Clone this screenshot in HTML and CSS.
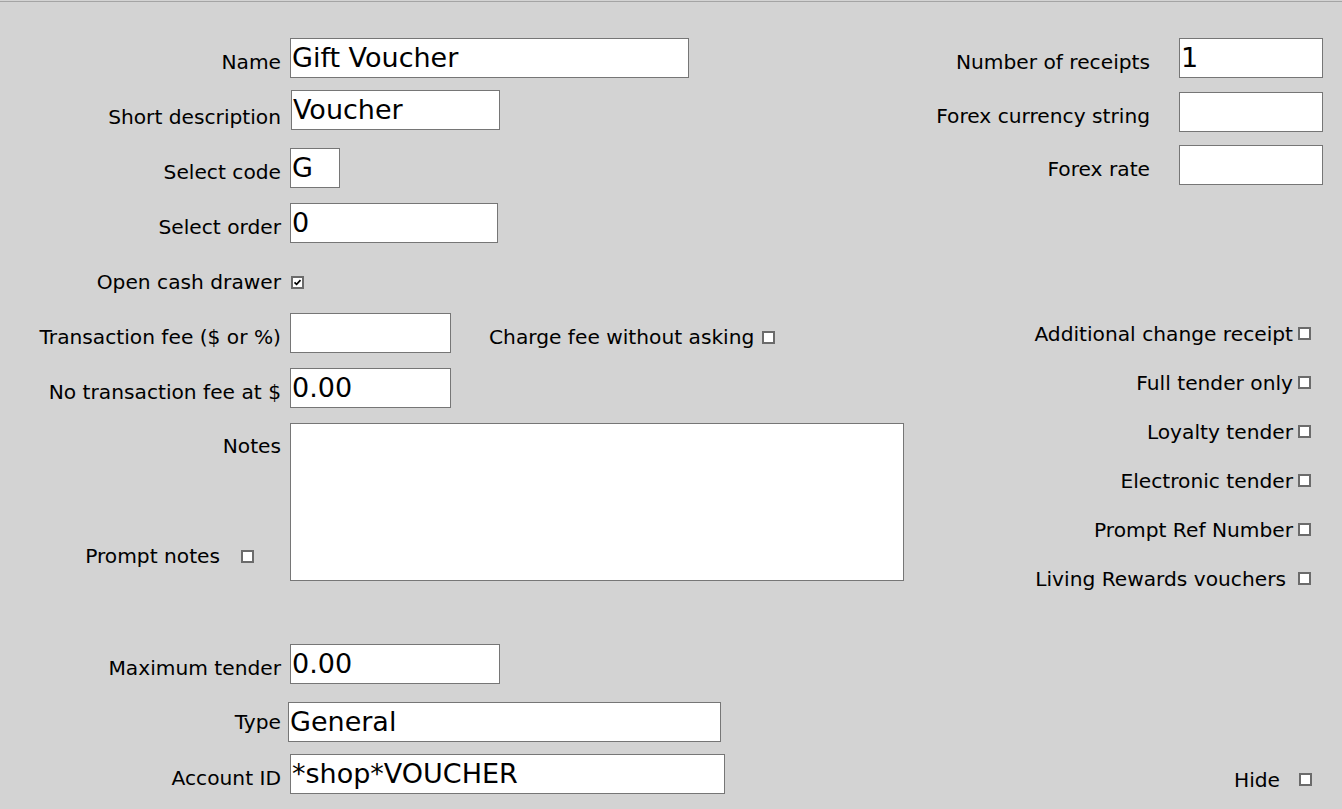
FILE: index.html
```html
<!DOCTYPE html>
<html lang="en">
<head>
<meta charset="utf-8">
<title>Tender type</title>
<link rel="stylesheet" href="styles.css">
</head>
<body>
<div class="page">
  <form class="left">
    <div class="row tight">
      <label class="lbl">Name</label>
      <div class="field"><input class="txt w-name" type="text" value="Gift Voucher"></div>
    </div>
    <div class="row loose">
      <label class="lbl lbl-low">Short description</label>
      <div class="field"><input class="txt w-short nudge" type="text" value="Voucher"></div>
    </div>
    <div class="row">
      <label class="lbl">Select code</label>
      <div class="field"><input class="txt w-code" type="text" value="G"></div>
    </div>
    <div class="row">
      <label class="lbl">Select order</label>
      <div class="field"><input class="txt w-order" type="text" value="0"></div>
    </div>
    <div class="row">
      <label class="lbl">Open cash drawer</label>
      <div class="field"><span class="cb cb-row"><svg viewBox="0 0 9 9" width="9" height="9"><path d="M1.5 4.3 L3.6 6.4 L7.5 2.2" fill="none" stroke="#000" stroke-width="1.7"/></svg></span></div>
    </div>
    <div class="row">
      <label class="lbl">Transaction fee ($ or %)</label>
      <div class="field">
        <input class="txt w-fee" type="text" value="">
        <span class="inline-flag">Charge fee without asking<span class="cb cb-near"></span></span>
      </div>
    </div>
    <div class="row">
      <label class="lbl">No transaction fee at $</label>
      <div class="field"><input class="txt w-fee" type="text" value="0.00"></div>
    </div>
    <div class="row notes">
      <div class="lbl notes-lbl">
        <span>Notes</span>
        <span class="prompt">Prompt notes<span class="cb cb-prompt"></span></span>
      </div>
      <div class="field"><textarea class="area"></textarea></div>
    </div>
    <div class="row loose">
      <label class="lbl">Maximum tender</label>
      <div class="field"><input class="txt w-max" type="text" value="0.00"></div>
    </div>
    <div class="row tight">
      <label class="lbl lbl-high">Type</label>
      <div class="field"><input class="txt w-type pull" type="text" value="General"></div>
    </div>
    <div class="row">
      <label class="lbl">Account ID</label>
      <div class="field"><input class="txt w-acct" type="text" value="*shop*VOUCHER"></div>
    </div>
  </form>

  <aside class="right">
    <div class="rfields">
      <label class="rlbl">Number of receipts</label><input class="txt w-r" type="text" value="1">
      <label class="rlbl">Forex currency string</label><input class="txt w-r" type="text" value="">
      <label class="rlbl">Forex rate</label><input class="txt w-r" type="text" value="">
    </div>
    <div class="flags">
      <div class="flag"><span>Additional change receipt</span><span class="cb"></span></div>
      <div class="flag"><span>Full tender only</span><span class="cb"></span></div>
      <div class="flag"><span>Loyalty tender</span><span class="cb"></span></div>
      <div class="flag"><span>Electronic tender</span><span class="cb"></span></div>
      <div class="flag"><span>Prompt Ref Number</span><span class="cb"></span></div>
      <div class="flag"><span>Living Rewards vouchers</span><span class="cb cb-wide"></span></div>
    </div>
    <div class="flag hide"><span>Hide</span><span class="cb cb-hide"></span></div>
  </aside>
</div>
</body>
</html>
```

FILE: styles.css
```css
html {
  background: #d3d3d3;
}
body {
  margin: 0;
  padding-top: 1px;
  background: #d3d3d3;
  color: #000;
  font-family: "DejaVu Sans", Verdana, sans-serif;
  font-size: 20.2px;
}
.page {
  border-top: 1px solid #a4a4a4;
  min-height: 807px;
  box-sizing: border-box;
  display: flex;
  justify-content: space-between;
}

/* left form */
.left {
  padding-top: 36px;
  margin: 0;
}
.row {
  display: grid;
  grid-template-columns: 281px auto;
  column-gap: 9px;
  align-items: end;
  height: 40px;
  margin-bottom: 15px;
}
.row.tight { margin-bottom: 12px; }
.row.loose { margin-bottom: 18px; }
.lbl {
  text-align: right;
  padding-bottom: 4px;
  white-space: nowrap;
}
.lbl-low { padding-bottom: 1px; }
.lbl-high { padding-bottom: 8px; }
.field {
  display: flex;
  align-items: flex-end;
  height: 40px;
}
.txt {
  box-sizing: border-box;
  height: 40px;
  margin: 0;
  border: 1px solid #767676;
  border-radius: 0;
  background: #fff;
  color: #000;
  font-family: "DejaVu Sans", Verdana, sans-serif;
  font-size: 27px;
  padding: 0 1px 2px;
  outline: none;
}
.w-name { width: 399px; }
.w-short { width: 209px; }
.w-code { width: 50px; }
.w-order { width: 208px; }
.w-fee { width: 161px; }
.w-max { width: 210px; }
.w-type { width: 433px; }
.w-acct { width: 435px; }
.w-r { width: 144px; }
.nudge { margin-left: 1px; }
.pull { margin-left: -2px; }

.cb {
  display: inline-flex;
  align-items: center;
  justify-content: center;
  box-sizing: border-box;
  width: 13px;
  height: 13px;
  border: 2px solid #6b6b6b;
  background: #fff;
  flex: none;
  margin-left: 5px;
}
.cb svg { display: block; }
.cb-row {
  margin-left: 1px;
  margin-bottom: 9px;
}
.inline-flag {
  display: flex;
  align-items: center;
  margin-left: 38px;
  padding-bottom: 4px;
  white-space: nowrap;
}
.cb-near { margin-left: 8px; }

.notes {
  height: 158px;
  margin-bottom: 63px;
}
.notes-lbl {
  align-self: stretch;
  display: flex;
  flex-direction: column;
  justify-content: space-between;
  align-items: flex-end;
  padding-top: 11px;
  padding-bottom: 13px;
}
.prompt {
  display: flex;
  align-items: center;
  padding-right: 27px;
}
.cb-prompt { margin-left: 21px; }
.notes .field { height: 158px; }
.area {
  box-sizing: border-box;
  width: 614px;
  height: 158px;
  margin: 0;
  border: 1px solid #767676;
  border-radius: 0;
  background: #fff;
  resize: none;
  outline: none;
}

/* right column */
.right {
  padding-top: 36px;
  display: flex;
  flex-direction: column;
  align-items: stretch;
}
.rfields {
  display: grid;
  grid-template-columns: auto 144px;
  column-gap: 29px;
  row-gap: 13.5px;
  align-items: end;
  padding-right: 19px;
}
.rlbl {
  text-align: right;
  padding-bottom: 4px;
  white-space: nowrap;
}
.flags {
  margin-top: 124px;
}
.flag {
  display: flex;
  justify-content: flex-end;
  align-items: center;
  height: 49px;
  padding-right: 31px;
  white-space: nowrap;
}
.cb-wide { margin-left: 12px; }
.hide {
  margin-top: auto;
  padding-right: 30px;
  margin-bottom: 5px;
}
.cb-hide { margin-left: 19px; }
```
